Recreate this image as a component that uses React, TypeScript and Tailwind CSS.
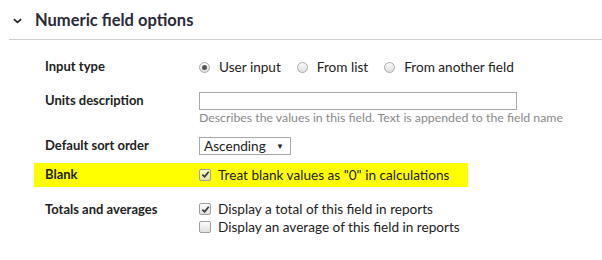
import { useState } from "react";

function Radio({ checked, label }: { checked?: boolean; label: string }) {
  return (
    <label className="flex items-center gap-[9px]">
      <span className="flex h-[11px] w-[11px] items-center justify-center rounded-full border border-[#a9a9a9] bg-gradient-to-b from-[#fcfcfc] to-[#dedede]">
        {checked && <span className="h-[5px] w-[5px] rounded-full bg-[#555]" />}
      </span>
      <span>{label}</span>
    </label>
  );
}

function Check({ checked, label }: { checked?: boolean; label: string }) {
  return (
    <label className="flex items-center gap-[7px]">
      <span className="flex h-[12px] w-[12px] items-center justify-center rounded-[2px] border border-[#a0a0a0] bg-gradient-to-b from-[#fcfcfc]/80 to-[#d8d8d8]/80">
        {checked && (
          <svg viewBox="0 0 10 10" className="h-[9px] w-[9px]">
            <path d="M1.5 5.2 L4 7.6 L8.6 2" fill="none" stroke="#333" strokeWidth="1.8" />
          </svg>
        )}
      </span>
      <span>{label}</span>
    </label>
  );
}

export default function App() {
  const [sort] = useState("Ascending");
  return (
    <div className="h-[260px] w-[602px] bg-white font-['Lato','Liberation_Sans',sans-serif] text-[13px] text-[#222]">
      <div className="flex h-[39px] items-center pl-[13px] pt-[2px]">
        <svg viewBox="0 0 10 6" className="h-[6px] w-[9px]">
          <path d="M1 1 L5 4.6 L9 1" fill="none" stroke="#222" strokeWidth="1.8" />
        </svg>
        <h2 className="ml-[13px] text-[16.5px] font-bold text-[#2a2a3a]">Numeric field options</h2>
      </div>
      <div className="ml-[9px] h-px bg-[#cfcfcf]" />

      <div className="mt-[18px] flex h-[18px] items-center">
        <div className="w-[199px] pl-[45px] font-bold">Input type</div>
        <div className="flex items-center gap-[16px] text-[13.6px]">
          <Radio checked label="User input" />
          <Radio label="From list" />
          <Radio label="From another field" />
        </div>
      </div>

      <div className="mt-[16px] flex">
        <div className="w-[199px] pl-[45px] font-bold leading-[16px]">Units description</div>
        <div className="flex flex-col">
          <div className="h-[18px] w-[318px] border border-[#a9a9a9] bg-white" />
          <div className="text-[12.3px] leading-[16px] text-[#8a8a8a]">
            Describes the values in this field. Text is appended to the field name
          </div>
        </div>
      </div>

      <div className="mt-[11px] flex h-[18px] items-center">
        <div className="w-[199px] pl-[45px] font-bold">Default sort order</div>
        <div className="flex h-[18px] w-[92px] items-center justify-between border border-[#a9a9a9] pl-[4px] pr-[6px] text-[13.6px]">
          <span>{sort}</span>
          <span className="text-[8px]">▼</span>
        </div>
      </div>

      <div className="ml-[34px] mt-[8px] flex h-[24px] w-[434px] items-center bg-[#ffff00]">
        <div className="w-[165px] pl-[11px] font-bold">Blank</div>
        <div className="text-[13.6px]">
          <Check checked label={'Treat blank values as "0" in calculations'} />
        </div>
      </div>

      <div className="mt-[13px] flex">
        <div className="w-[199px] pl-[45px] font-bold leading-[18px]">Totals and averages</div>
        <div className="flex flex-col text-[13.6px] leading-[18px]">
          <Check checked label="Display a total of this field in reports" />
          <Check label="Display an average of this field in reports" />
        </div>
      </div>
    </div>
  );
}
